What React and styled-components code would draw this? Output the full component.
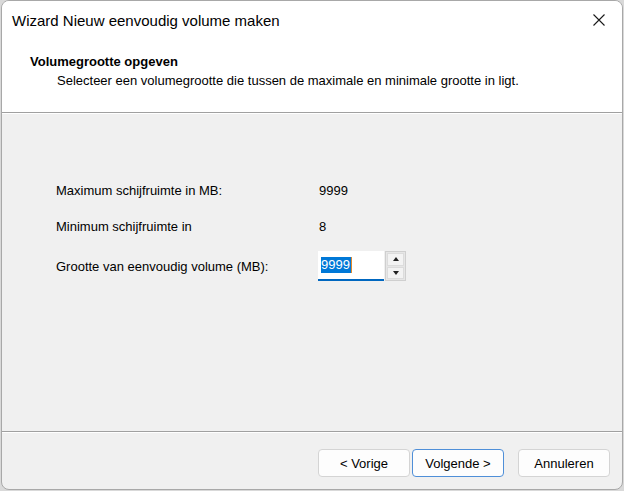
import React from 'react';
import styled, { createGlobalStyle } from 'styled-components';

const GlobalStyle = createGlobalStyle`
    html, body {
        margin: 0;
        padding: 0;
        background: #d9d9d9;
    }
    body {
        font-family: "Liberation Sans", Arial, sans-serif;
        color: #000;
    }
`;

function App() {
    return (
        <>
            <GlobalStyle />
            <Screen>
                <Window>
                    <TitleBar>
                        <span>Wizard Nieuw eenvoudig volume maken</span>
                        <CloseButton aria-label="Sluiten">
                            <svg width="12" height="12" viewBox="0 0 12 12">
                                <path d="M0.5 0.5 L11.5 11.5 M11.5 0.5 L0.5 11.5" stroke="#1a1a1a" strokeWidth="1.1" fill="none" />
                            </svg>
                        </CloseButton>
                    </TitleBar>

                    <Header>
                        <h1>Volumegrootte opgeven</h1>
                        <p>Selecteer een volumegrootte die tussen de maximale en minimale grootte in ligt.</p>
                    </Header>

                    <Body>
                        <Row>
                            <Label>Maximum schijfruimte in MB:</Label>
                            <Value>9999</Value>
                        </Row>
                        <Row $top={6}>
                            <Label>Minimum schijfruimte in</Label>
                            <Value>8</Value>
                        </Row>
                        <Row $top={10}>
                            <Label>Grootte van eenvoudig volume (MB):</Label>
                            <SpinBox>
                                <Field>
                                    <Selected>9999</Selected>
                                    <Caret />
                                </Field>
                                <Spinner>
                                    <SpinButton>
                                        <svg width="6" height="4" viewBox="0 0 6 4"><path d="M3 0 L6 4 L0 4 Z" fill="#222" /></svg>
                                    </SpinButton>
                                    <SpinButton>
                                        <svg width="6" height="4" viewBox="0 0 6 4"><path d="M0 0 L6 0 L3 4 Z" fill="#222" /></svg>
                                    </SpinButton>
                                </Spinner>
                            </SpinBox>
                        </Row>
                    </Body>

                    <Footer>
                        <Button>&lt; Vorige</Button>
                        <Button $focused>Volgende &gt;</Button>
                        <Button $gap={14}>Annuleren</Button>
                    </Footer>
                </Window>
            </Screen>
        </>
    );
}

const Screen = styled.div`
    width: 624px;
    height: 491px;
    padding-left: 1px;
    box-sizing: border-box;
    overflow: hidden;
`;

const Window = styled.div`
    width: 622px;
    height: 490px;
    box-sizing: border-box;
    display: flex;
    flex-direction: column;
    background: #f0f0f0;
    border: 1px solid #a8a8a8;
    border-radius: 8px;
    overflow: hidden;
    font-size: 13px;
`;

const TitleBar = styled.div`
    height: 38px;
    flex: none;
    display: flex;
    align-items: center;
    justify-content: space-between;
    padding: 0 0 0 10px;
    background: #fff;
    font-size: 15px;
    color: #000;
`;

const CloseButton = styled.div`
    width: 46px;
    height: 38px;
    display: flex;
    align-items: center;
    justify-content: center;
`;

const Header = styled.div`
    height: 74px;
    flex: none;
    box-sizing: border-box;
    background: #fff;
    padding: 14px 0 0 28px;
    border-bottom: 1px solid #a0a0a0;
    box-shadow: 0 1px 0 #fff;
    h1 {
        margin: 0;
        font-size: 13px;
        font-weight: bold;
        line-height: 17px;
    }
    p {
        margin: 2px 0 0 27px;
        line-height: 17px;
    }
`;

const Body = styled.div`
    flex: 1;
    display: flex;
    flex-direction: column;
    padding: 62px 0 0 54px;
    border-bottom: 1px solid #a0a0a0;
    box-shadow: 0 1px 0 #fff;
`;

const Row = styled.div`
    display: grid;
    grid-template-columns: 262px auto;
    align-items: center;
    height: 30px;
    margin-top: ${p => p.$top || 0}px;
`;

const Label = styled.span`
    line-height: 17px;
`;

const Value = styled.span`
    padding-left: 1px;
    line-height: 17px;
`;

const SpinBox = styled.div`
    display: flex;
    align-items: stretch;
    height: 30px;
    gap: 1px;
`;

const Field = styled.div`
    width: 66px;
    box-sizing: border-box;
    display: flex;
    align-items: center;
    padding-left: 3px;
    background: #fff;
    border-bottom: 2px solid #0067c0;
`;

const Selected = styled.span`
    background: #0078d7;
    color: #fff;
    line-height: 16px;
    padding: 0 1px 0 0;
`;

const Caret = styled.span`
    width: 1px;
    height: 16px;
    background: #e08a2c;
`;

const Spinner = styled.div`
    width: 21px;
    box-sizing: border-box;
    display: flex;
    flex-direction: column;
    border: 1px solid #cfcfcf;
    background: #e6e6e6;
    padding: 1px;
    gap: 1px;
`;

const SpinButton = styled.div`
    flex: 1;
    display: flex;
    align-items: center;
    justify-content: center;
    background: #f3f3f3;
    border: 1px solid #dcdcdc;
`;

const Footer = styled.div`
    height: 57px;
    flex: none;
    box-sizing: border-box;
    display: flex;
    justify-content: flex-end;
    align-items: flex-start;
    padding: 17px 12px 0 0;
    gap: 2px;
`;

const Button = styled.div`
    width: 92px;
    height: 28px;
    box-sizing: border-box;
    display: flex;
    align-items: center;
    justify-content: center;
    margin-left: ${p => (p.$gap ? p.$gap - 2 : 0)}px;
    background: #fdfdfd;
    border: 1px solid ${p => (p.$focused ? '#4f8fd8' : '#d4d4d4')};
    border-radius: 4px;
    font-size: 13px;
`;

export default App;
